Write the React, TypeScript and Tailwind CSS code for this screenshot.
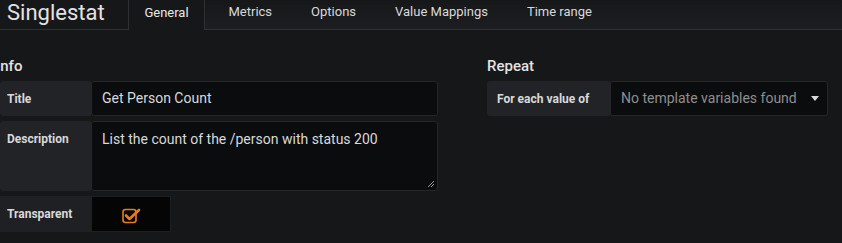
import React from 'react';

const tabs = ['General', 'Metrics', 'Options', 'Value Mappings', 'Time range'];

const App: React.FC = () => {
    return (
        <div className="w-[842px] h-[243px] overflow-hidden bg-[#161719] text-[#d8d9da]" style={{ fontFamily: 'Roboto, "Liberation Sans", sans-serif' }}>
            <header className="flex h-[30px]">
                <div className="w-[129px] h-[30px] bg-[#161719] border-r border-b border-[#2f3034] flex items-center pl-[7px]">
                    <span className="text-[22px] text-[#e3e3e3] leading-none -mt-[4px]">Singlestat</span>
                </div>
                <div className="w-[75px] h-[30px] flex items-center justify-center pb-[5px]">
                    <span className="text-[13px] text-[#e9e9e9]">General</span>
                </div>
                <div className="flex-1 h-[30px] flex pl-[4px] bg-gradient-to-b from-[#161719] to-[#1d1e21] border-l border-b border-[#2f3034] pb-[5px]">
                    {tabs.slice(1).map((t) => (
                        <div key={t} className="px-[19.5px] flex items-center text-[13px] text-[#d8d9da]">{t}</div>
                    ))}
                </div>
            </header>

            <main className="flex pt-[29px]">
                <section className="w-[438px]">
                    <h3 className="text-[15px] font-medium text-[#e3e3e3] -ml-[4px] leading-none mb-[7px]">Info</h3>
                    <div className="flex mb-[5px]">
                        <label className="w-[91px] h-[35px] bg-[#222327] rounded-l-[3px] flex items-center pl-[7px] text-[12px] font-bold text-[#d8d9da]">Title</label>
                        <div className="flex-1 h-[35px] bg-[#0b0c0e] border border-[#262628] rounded-[3px] flex items-center pl-[10px] text-[14px] text-[#d8d9da]">Get Person Count</div>
                    </div>
                    <div className="flex mb-[5px]">
                        <label className="w-[91px] h-[70px] bg-[#222327] rounded-l-[3px] flex items-start pt-[9px] pl-[7px] text-[12px] font-bold text-[#d8d9da]">Description</label>
                        <div className="relative flex-1 h-[70px] bg-[#0b0c0e] border border-[#262628] rounded-[3px] pl-[10px] pt-[7px] text-[14px] text-[#d8d9da]">
                            List the count of the /person with status 200
                            <svg className="absolute right-[2px] bottom-[2px]" width="8" height="8" viewBox="0 0 8 8">
                                <path d="M7 1 L1 7 M7 4 L4 7" stroke="#9a9a9a" strokeWidth="1" />
                            </svg>
                        </div>
                    </div>
                    <div className="flex">
                        <label className="w-[91px] h-[36px] bg-[#1f2023] flex items-center pl-[7px] text-[12px] font-bold text-[#d8d9da]">Transparent</label>
                        <div className="w-[80px] h-[36px] bg-[#050506] border border-[#1e1f22] flex items-center justify-center pt-[2px]">
                            <svg width="19" height="17" viewBox="0 0 19 17">
                                <rect x="1" y="2.5" width="13" height="13" rx="2.5" fill="none" stroke="#eb7b18" strokeWidth="1.6" />
                                <path d="M4 8.5 L7.5 12 L17 3" fill="none" stroke="#eb7b18" strokeWidth="2.6" strokeLinecap="round" strokeLinejoin="round" />
                            </svg>
                        </div>
                    </div>
                </section>

                <section className="ml-[49px] w-[341px]">
                    <h3 className="text-[15px] font-medium text-[#e3e3e3] leading-none mb-[7px]">Repeat</h3>
                    <div className="flex">
                        <label className="w-[123px] h-[35px] bg-[#222327] rounded-l-[3px] flex items-center pl-[10px] text-[12px] font-bold text-[#d8d9da]">For each value of</label>
                        <div className="flex-1 h-[35px] bg-[#0b0c0e] border border-[#262628] rounded-[3px] flex items-center pl-[10px] pr-[8px] text-[14px] text-[#8e8e8e]">
                            <span className="flex-1">No template variables found</span>
                            <svg width="8" height="5" viewBox="0 0 8 5">
                                <path d="M0 0 L8 0 L4 5 Z" fill="#d8d9da" />
                            </svg>
                        </div>
                    </div>
                </section>
            </main>
        </div>
    );
};

export default App;
